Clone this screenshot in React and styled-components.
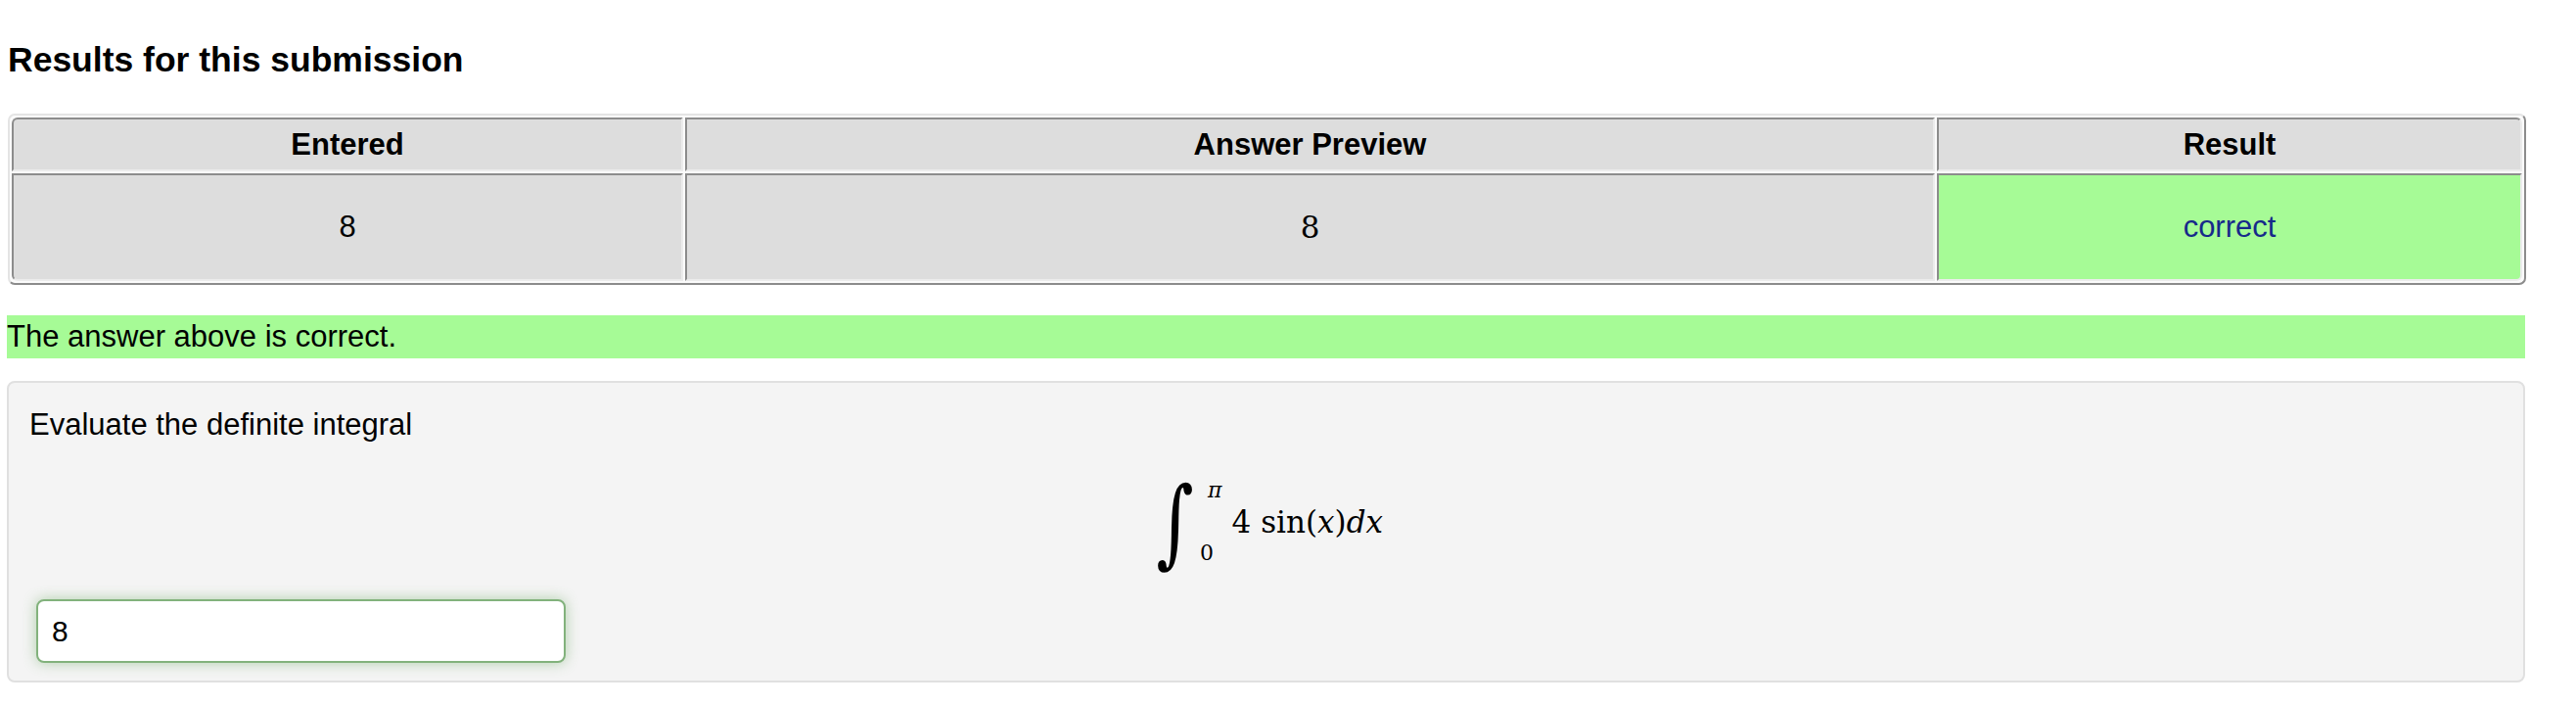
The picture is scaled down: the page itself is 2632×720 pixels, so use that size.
import styled, { createGlobalStyle } from "styled-components";

const GlobalStyle = createGlobalStyle`
  html, body {
    margin: 0;
    padding: 0;
    background: #ffffff;
  }
  body {
    font-family: "Liberation Sans", Arial, Helvetica, sans-serif;
    color: #000;
  }
`;

const Page = styled.div`
  width: 2572px;
  padding: 0 0 0 8px;
`;

const Heading = styled.h2`
  margin: 41px 0 0;
  font-size: 35.5px;
  line-height: 40px;
  font-weight: 700;
`;

const ResultsTable = styled.table`
  margin-top: 35px;
  width: 2572px;
  table-layout: fixed;
  border-collapse: separate;
  border-spacing: 2px;
  border: 2px solid;
  border-color: #e4e4e4 #8c8c8c #8c8c8c #e4e4e4;
  border-radius: 7px;
  background: #fbfbfb;
`;

const Cell = styled.td`
  box-sizing: border-box;
  width: ${(p) => p.$w}px;
  padding: 0;
  text-align: center;
  vertical-align: middle;
  background: ${(p) => (p.$ok ? "#a6fb96" : "#dddddd")};
  border: 2px solid;
  border-color: #8c8c8c #ececec #ececec #8c8c8c;
  border-top-left-radius: ${(p) => (p.$tl ? "6px" : "0")};
  border-top-right-radius: ${(p) => (p.$tr ? "6px" : "0")};
  border-bottom-left-radius: ${(p) => (p.$bl ? "6px" : "0")};
  border-bottom-right-radius: ${(p) => (p.$br ? "6px" : "0")};
`;

const HeadCell = styled(Cell).attrs({ as: "th" })`
  height: 55px;
  font-size: 31px;
  font-weight: 700;
`;

const DataCell = styled(Cell)`
  height: 110px;
  font-size: 31px;
  color: ${(p) => (p.$ok ? "#16298a" : "#000")};
`;

const MathText = styled.span`
  font-family: "DejaVu Serif", serif;
  font-size: 31px;
`;

const Notice = styled.div`
  margin-top: 31px;
  height: 44px;
  line-height: 44px;
  font-size: 31px;
  background: #a6fb96;
  margin-left: -1px;
`;

const ProblemBox = styled.div`
  margin-top: 23px;
  margin-left: -1px;
  box-sizing: border-box;
  height: 308px;
  padding: 25px 20px 0 21px;
  background: #f4f4f4;
  border: 2px solid #e0e0e0;
  border-radius: 8px;
`;

const Prompt = styled.div`
  font-size: 31px;
  line-height: 36px;
`;

const Display = styled.div`
  display: flex;
  justify-content: center;
  align-items: center;
  margin-top: 36px;
  height: 90px;
  font-family: "DejaVu Serif", serif;
`;

const Integral = styled.span`
  display: inline-flex;
  align-items: stretch;
  height: 90px;
  margin-right: 10px;
`;

const Sign = styled.span`
  font-size: 98px;
  line-height: 90px;
  font-weight: 300;
  transform: scaleX(0.75);
`;

const Limits = styled.span`
  display: flex;
  flex-direction: column;
  justify-content: space-between;
  font-size: 22px;
  line-height: 22px;
`;

const Upper = styled.i`
  margin-left: 8px;
  margin-top: 2px;
`;

const Lower = styled.span`
  margin-left: 0;
  margin-bottom: 2px;
`;

const Expr = styled.span`
  font-size: 31px;
`;

const Var = styled.i`
  font-style: italic;
`;

const AnswerInput = styled.input`
  display: block;
  box-sizing: border-box;
  margin: 34px 0 0 7px;
  width: 541px;
  height: 65px;
  padding: 0 14px;
  font-family: "Liberation Sans", Arial, sans-serif;
  font-size: 30px;
  color: #000;
  background: #fff;
  border: 2px solid #82b27c;
  border-radius: 8px;
  box-shadow: 0 0 14px rgba(90, 160, 80, 0.45);
  outline: none;
`;

export default function App() {
  return (
    <Page>
      <GlobalStyle />
      <Heading>Results for this submission</Heading>
      <ResultsTable>
        <thead>
          <tr>
            <HeadCell $w={686} $tl>Entered</HeadCell>
            <HeadCell $w={1277}>Answer Preview</HeadCell>
            <HeadCell $w={598} $tr>Result</HeadCell>
          </tr>
        </thead>
        <tbody>
          <tr>
            <DataCell $bl>8</DataCell>
            <DataCell>
              <MathText>8</MathText>
            </DataCell>
            <DataCell $ok $br>correct</DataCell>
          </tr>
        </tbody>
      </ResultsTable>
      <Notice>The answer above is correct.</Notice>
      <ProblemBox>
        <Prompt>Evaluate the definite integral</Prompt>
        <Display>
          <Integral>
            <Sign>∫</Sign>
            <Limits>
              <Upper>π</Upper>
              <Lower>0</Lower>
            </Limits>
          </Integral>
          <Expr>
            4 sin(<Var>x</Var>)<Var>dx</Var>
          </Expr>
        </Display>
        <AnswerInput defaultValue="8" readOnly />
      </ProblemBox>
    </Page>
  );
}
